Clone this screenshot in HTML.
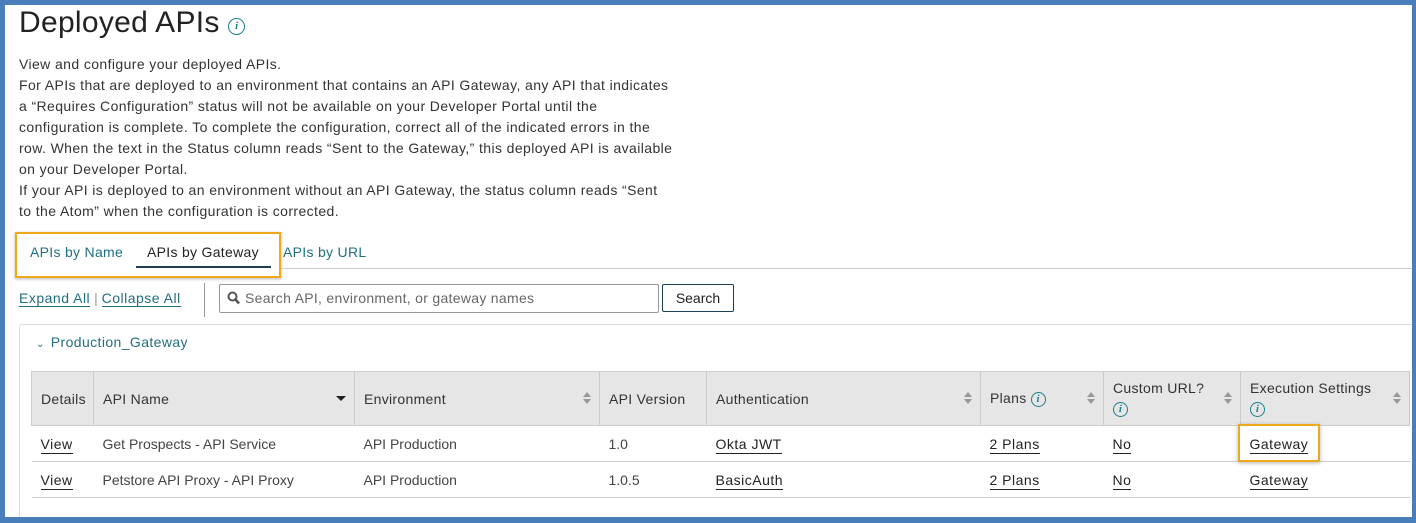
<!DOCTYPE html>
<html><head><meta charset="utf-8"><style>
*{margin:0;padding:0;box-sizing:border-box}
body{width:1416px;height:523px;overflow:hidden;background:#4a7ebb;font-family:"Liberation Sans",sans-serif;color:#333}
#page{position:absolute;left:5px;top:5px;width:1407px;height:512px;background:#fff;overflow:hidden}
.a{position:absolute;white-space:nowrap}
.info{display:inline-block;width:15px;height:15px;border:1.5px solid #1f7f8c;border-radius:50%;color:#1f7f8c;font:italic bold 11px "Liberation Serif",serif;text-align:center;line-height:12px;vertical-align:middle}
.desc{left:14px;top:49px;font-size:14px;line-height:21px;color:#333;letter-spacing:0.4px}
.tab{font-size:14px;color:#1f6f80;top:239px;letter-spacing:0.3px}
.lnk{color:#1f6f80;border-bottom:1px solid #1f6f80;font-size:14px;letter-spacing:0.5px}
table{position:absolute;left:26px;top:366px;border-collapse:collapse;font-size:14px;width:1378px;table-layout:fixed}
th{background:#e6e6e6;font-weight:normal;text-align:left;color:#333;height:54px;border:1px solid #ccc;padding:0 9px;position:relative;vertical-align:middle;letter-spacing:0.3px}
td{height:36px;border-bottom:1px solid #ccc;padding:0 9px;color:#444}
.u{border-bottom:1.5px solid #222;color:#222;padding-bottom:1px;letter-spacing:0.5px}
.s{position:absolute;right:8px;top:20px;width:8px;height:12px}
.s:before{content:"";position:absolute;left:0;top:0;border:4px solid transparent;border-bottom:5px solid #999;border-top:0}
.s:after{content:"";position:absolute;left:0;top:7px;border:4px solid transparent;border-top:5px solid #999;border-bottom:0}
</style></head><body><div id="page">
<div class="a" style="left:14px;top:-2px;font-size:30px;color:#222;line-height:40px;letter-spacing:0.3px">Deployed APIs <span class="info" style="width:17px;height:17px;line-height:14px;vertical-align:3px">i</span></div>
<div class="a desc">View and configure your deployed APIs.<br>For APIs that are deployed to an environment that contains an API Gateway, any API that indicates<br>a “Requires Configuration” status will not be available on your Developer Portal until the<br>configuration is complete. To complete the configuration, correct all of the indicated errors in the<br>row. When the text in the Status column reads “Sent to the Gateway,” this deployed API is available<br>on your Developer Portal.<br>If your API is deployed to an environment without an API Gateway, the status column reads “Sent<br>to the Atom” when the configuration is corrected.</div>
<div class="a" style="left:10px;top:227px;width:266px;height:46px;border:2px solid #f2a81d;box-shadow:0 1px 3px rgba(0,0,0,.3)"></div>
<div class="a tab" style="left:25px">APIs by Name</div>
<div class="a tab" style="left:142px;color:#222">APIs by Gateway</div>
<div class="a" style="left:131px;top:261px;width:135px;height:2px;background:#1d3f55"></div>
<div class="a tab" style="left:278px">APIs by URL</div>
<div class="a" style="left:276px;top:263px;width:1140px;height:1px;background:#ccc"></div>
<div class="a" style="left:14px;top:285px;font-size:14px"><span class="lnk">Expand All</span> <span style="color:#999">|</span> <span class="lnk">Collapse All</span></div>
<div class="a" style="left:199px;top:278px;width:1px;height:34px;background:#999"></div>
<div class="a" style="left:214px;top:279px;width:440px;height:29px;border:1px solid #999;border-radius:2px;font-size:14px;color:#666;padding:5px 0 0 25px;letter-spacing:0.3px">Search API, environment, or gateway names
<svg style="position:absolute;left:7px;top:6px" width="13" height="14" viewBox="0 0 13 14"><circle cx="5.5" cy="5.5" r="4" fill="none" stroke="#555" stroke-width="2"/><line x1="8.5" y1="8.5" x2="12" y2="12.5" stroke="#555" stroke-width="2.5"/></svg></div>
<div class="a" style="left:657px;top:279px;width:72px;height:28px;border:1px solid #1d3f55;border-radius:2px;font-size:14px;color:#222;text-align:center;line-height:26px">Search</div>
<div class="a" style="left:14px;top:319px;width:1400px;height:200px;border:1px solid #ddd;border-radius:3px"></div>
<div class="a" style="left:31px;top:329px;font-size:14px;color:#1f6f80;letter-spacing:0.4px"><span style="font-size:10px;margin-right:6px">⌄</span>Production_Gateway</div>
<table>
<colgroup><col style="width:62px"><col style="width:261px"><col style="width:245px"><col style="width:107px"><col style="width:274px"><col style="width:123px"><col style="width:137px"><col style="width:169px"></colgroup>
<tr><th style="padding-right:0;overflow:hidden">Details</th><th>API Name<span style="position:absolute;right:8px;top:24px;border:5px solid transparent;border-top:5px solid #222;border-bottom:0"></span></th><th>Environment<span class="s"></span></th><th>API Version</th><th>Authentication<span class="s"></span></th><th>Plans <span class="info">i</span><span class="s"></span></th><th style="line-height:21px">Custom URL?<br><span class="info">i</span><span class="s"></span></th><th style="line-height:21px">Execution Settings<br><span class="info">i</span><span class="s"></span></th></tr>
<tr><td><span class="u">View</span></td><td>Get Prospects - API Service</td><td>API Production</td><td>1.0</td><td><span class="u">Okta JWT</span></td><td><span class="u">2 Plans</span></td><td><span class="u">No</span></td><td><span class="u">Gateway</span></td></tr>
<tr><td><span class="u">View</span></td><td>Petstore API Proxy - API Proxy</td><td>API Production</td><td>1.0.5</td><td><span class="u">BasicAuth</span></td><td><span class="u">2 Plans</span></td><td><span class="u">No</span></td><td><span class="u">Gateway</span></td></tr>
</table>
<div class="a" style="left:1233px;top:419px;width:82px;height:38px;border:2px solid #f2a81d;box-shadow:0 1px 4px rgba(0,0,0,.3)"></div>
</div></body></html>
